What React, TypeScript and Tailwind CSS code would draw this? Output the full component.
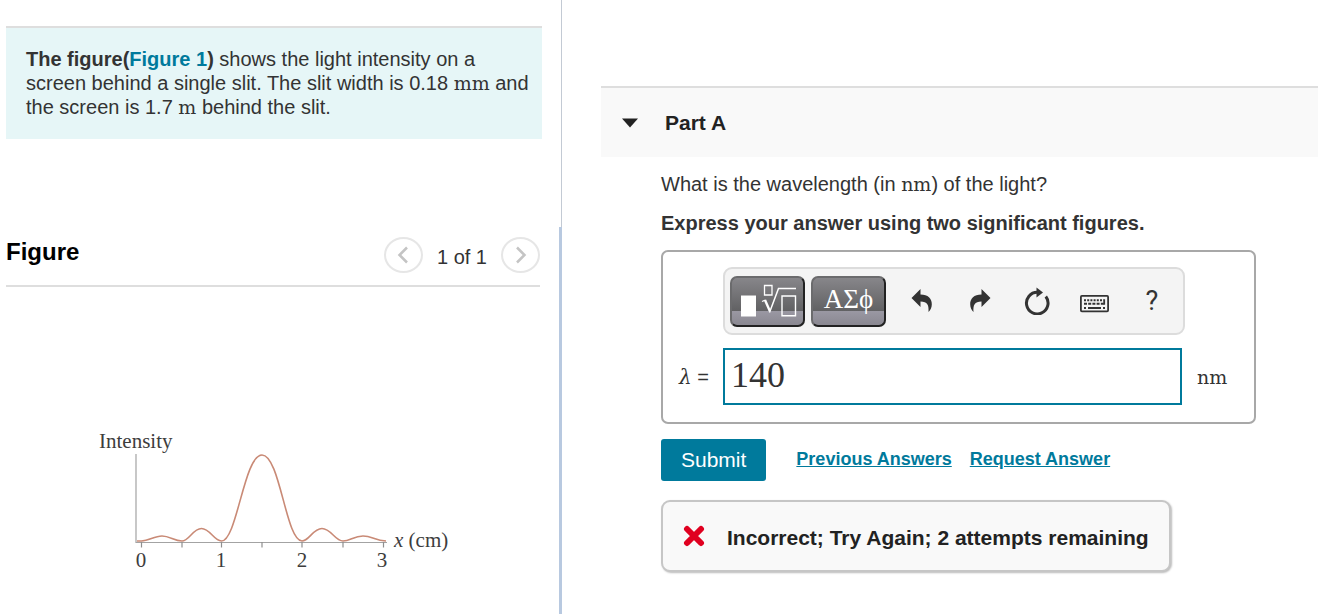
import { useState } from "react"
import type { ReactNode } from "react"
import { clsx } from "clsx"

const tickLabels = [
  { x: 46, label: "0" },
  { x: 126, label: "1" },
  { x: 207, label: "2" },
  { x: 287, label: "3" },
]

function Unit({ children }: { children: ReactNode }) {
  return <span className="font-['DejaVu_Serif',serif] text-[19px] leading-none">{children}</span>
}

function IntensityGraph() {
  return (
    <svg
      viewBox="0 0 360 146"
      role="img"
      aria-label="Light intensity against position"
      className="h-[146px] w-[360px] font-['Liberation_Serif',serif]"
      fill="none"
    >
      <path d="M41 24V112.5H292" stroke="#a3a3a3" strokeWidth="1.2" />
      <path
        d="M46.5 112v5.5M87 112v5.5M126.5 112v5.5M167 112v5.5M207 112v5.5M248 112v5.5M288.5 112v5.5"
        stroke="#8f8f8f"
        strokeWidth="1.2"
      />
      <path
        d="M42 111H46.5C54 111 59 106 67 106S79 111 87 111C94 111 98 98.5 106.5 98.5S119 111 126.5 111C142 111 149 25 167 25S191 111 207 111C214 111 218 98.5 227 98.5S240 111 248 111C255 111 259 106 268 106S280 110.5 291 111"
        stroke="#c98a76"
        strokeWidth="1.6"
      />
      <g fill="#3d3d3d" fontSize="21">
        <text x="4" y="18">
          Intensity
        </text>
        <text x="299" y="117">
          <tspan fontStyle="italic">x</tspan> (cm)
        </text>
        <g textAnchor="middle">
          {tickLabels.map((tick) => (
            <text key={tick.label} x={tick.x} y="137">
              {tick.label}
            </text>
          ))}
        </g>
      </g>
    </svg>
  )
}

function PagerButton({ label, path }: { label: string; path: string }) {
  return (
    <button
      type="button"
      aria-label={label}
      className="flex h-9 w-[39px] items-center justify-center rounded-[50%] border-2 border-[#e6e6e6] bg-white"
    >
      <svg viewBox="0 0 12 18" className="h-[18px] w-3" fill="none" stroke="#c4c4c4" strokeWidth="2.5">
        <path d={path} />
      </svg>
    </button>
  )
}

function KeypadButton({ label, children }: { label: string; children: ReactNode }) {
  return (
    <button
      type="button"
      aria-label={label}
      className="flex h-[51px] w-[75px] items-center justify-center rounded-[7px] border-2 border-t-[#6b6b6d] border-r-[#222] border-b-[#222] border-l-[#6b6b6d] bg-linear-[180deg,#87868a_0%,#616163_70%,#9a98a3_70%,#8a8891_100%] text-white"
    >
      {children}
    </button>
  )
}

function ToolButton({ label, children }: { label: string; children: ReactNode }) {
  return (
    <button type="button" aria-label={label} className="flex h-9 w-9 items-center justify-center text-[#333]">
      {children}
    </button>
  )
}

function TemplatesIcon() {
  return (
    <svg viewBox="1 0 58 34" className="h-[34px] w-[58px]" fill="none" stroke="white">
      <path d="M3 11.5h15v21H3z" fill="white" stroke="none" />
      <path d="M26.5 1.5h7.5v9.5h-7.5z" strokeWidth="1.3" />
      <path d="M24 17.5l3.5-1.5" strokeWidth="1.3" />
      <path d="M27 16l4.8 11" strokeWidth="2.4" />
      <path d="M31.5 28.5L40.5 4.5H58" strokeWidth="1.5" />
      <path d="M44 12h13.5V31.8H44z" strokeWidth="1.4" />
    </svg>
  )
}

function UndoIcon({ flipped = false }: { flipped?: boolean }) {
  return (
    <svg viewBox="0 0 22 24" className={clsx("h-6 w-[22px]", flipped && "-scale-x-100")} fill="currentColor">
      <path d="M0.5 9L9.5 0V5.5C17 5.5 21 9.5 20.8 15.5C20.7 18.5 19.5 21 17.5 23C18 16 16.5 12.5 9.5 12.5V18Z" />
    </svg>
  )
}

function ResetIcon() {
  return (
    <svg viewBox="0 0 26 28" className="h-7 w-[26px]" fill="none">
      <path d="M13.5 5.3A10.8 10.8 0 1 0 21.8 9.5" stroke="currentColor" strokeWidth="3" />
      <path d="M12.5 0.5L19 5.5L12.5 10.5Z" fill="currentColor" />
    </svg>
  )
}

function KeyboardIcon() {
  return (
    <svg viewBox="0 0 29 24" className="h-6 w-[29px]" fill="none" stroke="currentColor">
      <rect x="0.9" y="6.9" width="27.2" height="15.4" rx="1" strokeWidth="1.8" />
      <path d="M4 11.2h19.5" strokeWidth="2" strokeDasharray="2 1.2" />
      <path d="M4 14.8h20.5" strokeWidth="2" strokeDasharray="3 1.2" />
      <path d="M4 19h2M8 19h13M23 19h2M24.2 10.2v5.6" strokeWidth="1.8" />
    </svg>
  )
}

export default function App() {
  const [answer, setAnswer] = useState("140")
  const [expanded, setExpanded] = useState(true)

  return (
    <div className="grid min-h-screen grid-cols-[281fr_378fr] bg-white font-['Liberation_Sans',sans-serif] text-[#333]">
      <aside className="flex flex-col">
        <section className="border-r border-[#c3cad4] pt-[26px] pr-[19px] pb-22 pl-1.5">
          <p className="border-t-2 border-[#dedede] bg-[#e6f6f7] pt-[19px] pr-2 pb-5 pl-5 text-[20px] leading-6">
            <b>The figure(</b>
            <a href="#figure" className="font-bold text-[#007a9c]">
              Figure 1
            </a>
            <b>)</b> shows the light intensity on a <br />
            screen behind a single slit. The slit width is 0.18 <Unit>mm</Unit> and <br />
            the screen is 1.7 <Unit>m</Unit> behind the slit.
          </p>
        </section>

        <section id="figure" className="flex-1 border-r-3 border-[#b8c9e0] pt-2.5 pr-[19px] pl-1.5">
          <div className="flex justify-between border-b-2 border-[#dedede] pb-3">
            <h2 className="text-[24px] leading-[30px] font-bold text-black">Figure</h2>
            <div className="flex items-center gap-3.5 text-[20px]">
              <PagerButton label="Previous figure" path="M10 1.5L2.5 9L10 16.5" />
              <span className="pt-1">1 of 1</span>
              <PagerButton label="Next figure" path="M2 1.5L9.5 9L2 16.5" />
            </div>
          </div>
          <div className="flex justify-center pt-[143px] pl-1">
            <IntensityGraph />
          </div>
        </section>
      </aside>

      <main className="pt-[86px] pl-[39px]">
        <h2 className="border-t-2 border-[#dedede] bg-[#f9f9f9]">
          <button
            type="button"
            aria-expanded={expanded}
            onClick={() => setExpanded(!expanded)}
            className="flex h-[69px] w-full items-center gap-[27px] pl-[21px] text-[21px] font-bold text-[#222]"
          >
            <svg viewBox="0 0 16 10" className={clsx("h-2.5 w-4", !expanded && "-rotate-90")} fill="#222">
              <path d="M0 0.5H16L8 9.5Z" />
            </svg>
            Part A
          </button>
        </h2>

        {expanded && (
          <div className="flex flex-col items-start pr-5 pl-[60px]">
            <p className="pt-[15px] text-[20px] leading-6">
              What is the wavelength (in <Unit>nm</Unit>) of the light?
            </p>
            <p className="pt-[15px] text-[20px] leading-6 font-bold">Express your answer using two significant figures.</p>

            <div className="mt-[15px] grid w-full max-w-[595px] grid-cols-[44px_1fr_56px] items-center gap-y-[13px] rounded-[7px] border-2 border-[#a8a8a8] px-4 pt-[15px] pb-[17px]">
              <div
                role="toolbar"
                aria-label="Math editor"
                className="col-start-2 -mr-[3px] flex h-[68px] items-center gap-1.5 rounded-[9px] border-2 border-[#dcdcdc] bg-[#f4f4f4] px-[5px]"
              >
                <KeypadButton label="Templates">
                  <TemplatesIcon />
                </KeypadButton>
                <KeypadButton label="Symbols">
                  <span className="pb-1 font-['Liberation_Serif',serif] text-[27px]">ΑΣϕ</span>
                </KeypadButton>
                <div className="flex flex-1 justify-between pr-2 pl-3">
                  <ToolButton label="Undo">
                    <UndoIcon />
                  </ToolButton>
                  <ToolButton label="Redo">
                    <UndoIcon flipped />
                  </ToolButton>
                  <ToolButton label="Reset">
                    <ResetIcon />
                  </ToolButton>
                  <ToolButton label="Keyboard shortcuts">
                    <KeyboardIcon />
                  </ToolButton>
                  <ToolButton label="Help">
                    <span className="font-[Roboto,sans-serif] text-[27px]">?</span>
                  </ToolButton>
                </div>
              </div>

              <label htmlFor="wavelength" className="col-start-1 text-[20px] whitespace-nowrap">
                <i className="font-['DejaVu_Serif',serif]">λ</i> =
              </label>
              <input
                id="wavelength"
                type="text"
                value={answer}
                onChange={(e) => setAnswer(e.target.value)}
                className="h-[57px] w-full border-2 border-[#007a9c] bg-white px-1.5 pb-1 font-['Liberation_Serif',serif] text-[36px] outline-none"
              />
              <span className="pt-1 pl-[15px]">
                <Unit>nm</Unit>
              </span>
            </div>

            <div className="flex items-center gap-[18px] pt-[15px] text-[18px] font-bold text-[#007a9c]">
              <button
                type="button"
                className="mr-3 h-[42px] rounded-[3px] bg-[#007a9c] px-5 text-[21px] font-normal text-white"
              >
                Submit
              </button>
              <a href="#previous" className="pb-0.5 underline">
                Previous Answers
              </a>
              <a href="#request" className="pb-0.5 underline">
                Request Answer
              </a>
            </div>

            <div
              role="status"
              className="mt-[19px] flex h-[72px] items-center gap-[22px] rounded-[9px] border-2 border-[#c6c6c6] bg-[#f9f9f9] px-5 text-[21px] font-bold text-[#222] shadow-[1px_1px_2px_#bbb]"
            >
              <svg
                viewBox="0 0 22 22"
                className="h-[22px] w-[22px]"
                fill="none"
                stroke="#e00020"
                strokeWidth="6"
                strokeLinecap="round"
              >
                <path d="M4 4L18 18M18 4L4 18" />
              </svg>
              <span className="pt-1">Incorrect; Try Again; 2 attempts remaining</span>
            </div>
          </div>
        )}
      </main>
    </div>
  )
}
